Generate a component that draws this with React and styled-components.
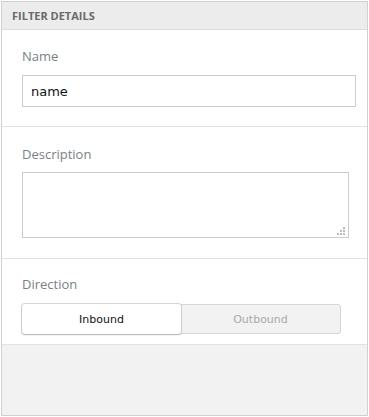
import React, { useState } from "react";
import styled, { createGlobalStyle } from "styled-components";

const GlobalStyle = createGlobalStyle`
  html, body {
    margin: 0;
    padding: 0;
    background: #fff;
  }
  body {
    font-family: "Open Sans", "DejaVu Sans", sans-serif;
  }
`;

export default function App() {
  const [name, setName] = useState("name");
  const [description, setDescription] = useState("");
  const [direction, setDirection] = useState("inbound");

  return (
    <>
      <GlobalStyle />
      <Frame>
        <Panel>
          <Header>FILTER DETAILS</Header>
          <Section $pad="17px 0 19px 20px" $gap="10px">
            <Label>Name</Label>
            <TextInput value={name} onChange={(e) => setName(e.target.value)} />
          </Section>
          <Section $pad="18px 0 20px 20px">
            <Label>Description</Label>
            <AreaWrap>
              <TextArea
                value={description}
                onChange={(e) => setDescription(e.target.value)}
              />
              <Grip width="9" height="9" viewBox="0 0 9 9">
                <rect x="6" y="0" width="2" height="2" />
                <rect x="3" y="3" width="2" height="2" />
                <rect x="6" y="3" width="2" height="2" />
                <rect x="0" y="6" width="2" height="2" />
                <rect x="3" y="6" width="2" height="2" />
                <rect x="6" y="6" width="2" height="2" />
              </Grip>
            </AreaWrap>
          </Section>
          <Section $pad="16px 0 10px 20px" $gap="11px">
            <Label>Direction</Label>
            <Toggle>
              <ToggleButton
                $active={direction === "inbound"}
                onClick={() => setDirection("inbound")}
              >
                Inbound
              </ToggleButton>
              <ToggleButton
                $active={direction === "outbound"}
                onClick={() => setDirection("outbound")}
              >
                Outbound
              </ToggleButton>
            </Toggle>
          </Section>
          <Footer />
        </Panel>
      </Frame>
    </>
  );
}

const Frame = styled.div`
  padding: 1px;
  width: 369px;
  height: 417px;
  box-sizing: border-box;
`;

const Panel = styled.div`
  width: 367px;
  height: 415px;
  box-sizing: border-box;
  border: 1px solid #d0d0d0;
  display: flex;
  flex-direction: column;
  background: #fff;
`;

const Header = styled.div`
  height: 28px;
  box-sizing: border-box;
  background: #ececec;
  border-bottom: 1px solid #dcdcdc;
  padding: 0 10px;
  display: flex;
  align-items: center;
  font-family: "Open Sans", sans-serif;
  font-size: 11px;
  font-weight: 700;
  color: #6a6a6a;
`;

const Section = styled.div`
  display: flex;
  flex-direction: column;
  gap: ${(p) => p.$gap || "9px"};
  padding: ${(p) => p.$pad};
  border-bottom: 1px solid #e2e2e2;
`;

const Label = styled.div`
  font-family: "Open Sans", sans-serif;
  font-size: 13px;
  line-height: 18px;
  color: #7a7f87;
`;

const TextInput = styled.input`
  width: 334px;
  height: 32px;
  box-sizing: border-box;
  border: 1px solid #cccccc;
  padding: 0 8px;
  font-family: "DejaVu Sans", sans-serif;
  font-size: 13px;
  color: #111;
  outline: none;
`;

const AreaWrap = styled.div`
  position: relative;
  width: 327px;
  height: 66px;
`;

const TextArea = styled.textarea`
  width: 100%;
  height: 100%;
  box-sizing: border-box;
  border: 1px solid #cccccc;
  resize: none;
  outline: none;
  display: block;
  font-family: "DejaVu Sans", sans-serif;
  font-size: 13px;
`;

const Grip = styled.svg`
  position: absolute;
  right: 3px;
  bottom: 2px;
  fill: #bdbdbd;
`;

const Toggle = styled.div`
  display: flex;
  width: 319px;
  height: 30px;
  box-sizing: border-box;
  border: 1px solid #d6d6d6;
  border-radius: 3px;
  background: #f2f2f2;
`;

const ToggleButton = styled.button`
  flex: 1;
  border: none;
  border-radius: ${(p) => (p.$active ? "3px" : "0")};
  margin: ${(p) => (p.$active ? "-1px 0 -1px -1px" : "0")};
  background: ${(p) => (p.$active ? "#fff" : "transparent")};
  box-shadow: ${(p) => (p.$active ? "0 1px 2px rgba(0,0,0,0.18), 0 0 0 1px #d8d8d8" : "none")};
  font-family: "DejaVu Sans", Verdana, sans-serif;
  font-size: 11px;
  color: ${(p) => (p.$active ? "#111" : "#a9a9a9")};
  cursor: pointer;
  padding: 0;
`;

const Footer = styled.div`
  flex: 1;
  background: #f2f2f2;
`;
